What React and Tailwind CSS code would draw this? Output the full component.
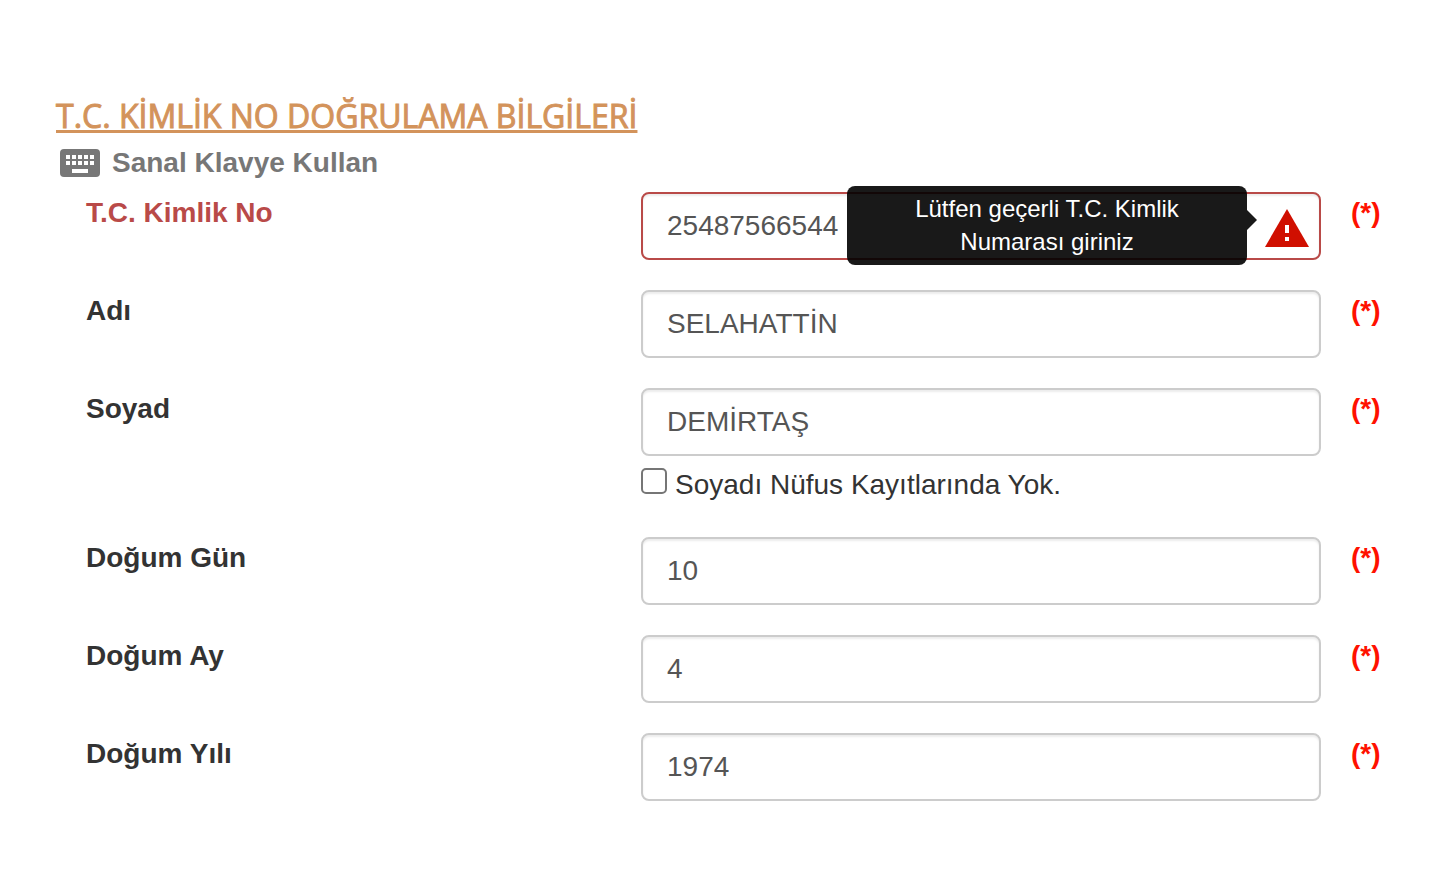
const fields = [
  { id: 'tckn',   label: 'T.C. Kimlik No', value: '25487566544', error: 'Lütfen geçerli T.C. Kimlik Numarası giriniz' },
  { id: 'adi',    label: 'Adı',            value: 'SELAHATTİN' },
  { id: 'soyad',  label: 'Soyad',          value: 'DEMİRTAŞ', checkbox: 'Soyadı Nüfus Kayıtlarında Yok.' },
  { id: 'gun',    label: 'Doğum Gün',      value: '10' },
  { id: 'ay',     label: 'Doğum Ay',       value: '4' },
  { id: 'yil',    label: 'Doğum Yılı',     value: '1974' },
]

function KeyboardIcon() {
  return (
    <svg width="40" height="28" viewBox="0 0 40 28" aria-hidden="true" className="shrink-0">
      <rect width="40" height="28" rx="4" fill="#777" />
      <g fill="#fff">
        {[6, 12].map(y => [6, 12, 18, 24, 30].map(x => (
          <rect key={`${x}-${y}`} x={x} y={y} width="4" height="4" />
        )))}
        <rect x="12" y="20" width="16" height="4" />
      </g>
    </svg>
  )
}

function WarningIcon() {
  return (
    <svg width="44" height="38" viewBox="0 0 44 38" aria-hidden="true">
      <path d="M22 0 44 38H0Z" fill="#d00f00" />
      <path d="M20 16h4v8h-4zM20 28h4v4h-4z" fill="#fff" />
    </svg>
  )
}

function ErrorHint({ text }) {
  return (
    <>
      <div role="tooltip"
        className="absolute -top-[6px] right-[74px] w-[400px] rounded-lg bg-black/90 px-4 pt-[6px] pb-[7px]
                   text-center text-2xl leading-[33px] text-white">
        <span className="block px-10">{text}</span>
        <span className="absolute left-full top-6 border-y-10 border-l-10 border-y-transparent border-l-black/90" />
      </div>
      <span className="absolute right-3 top-[17px]"><WarningIcon /></span>
    </>
  )
}

function Field({ id, label, value, error, checkbox }) {
  return (
    <div className="flex">
      <label htmlFor={id}
        className={`w-5/12 shrink-0 pl-[30px] font-bold ${error ? 'text-[#b94a48]' : 'text-[#333]'}`}>
        {label}
      </label>
      <div className="flex-1 min-w-0 px-[30px]">
        <div className="relative">
          <input id={id} type="text" defaultValue={value}
            className={`block w-full h-[68px] rounded-lg border-2 bg-white px-6 text-[#555] outline-none
                        shadow-[inset_0_2px_2px_rgba(0,0,0,0.075)]
                        ${error ? 'border-[#b94a48]' : 'border-[#ccc]'}`} />
          {error && <ErrorHint text={error} />}
        </div>
        {checkbox && (
          <label className="mt-2 mb-px flex items-start gap-2 text-[#333]">
            <input type="checkbox"
              className="mt-1 size-[26px] shrink-0 appearance-none rounded-[5px] border-2 border-[#767676] bg-white" />
            {checkbox}
          </label>
        )}
      </div>
      <span className="w-[37px] shrink-0 font-bold text-[#f10]">(*)</span>
    </div>
  )
}

export default function App() {
  return (
    <main className="min-h-screen bg-white pt-[92px] pb-[72px] pl-14 pr-[42px]
                     font-['Liberation_Sans',Arial,sans-serif] text-[28px] leading-[42px]">
      <h1 className="font-['Open_Sans',sans-serif] text-[32px] leading-[48px] text-[#d3935b]
                     [-webkit-text-stroke:1px_#d3935b]
                     underline decoration-[3px] underline-offset-2 [text-decoration-skip-ink:none]">
        T.C. KİMLİK NO DOĞRULAMA BİLGİLERİ
      </h1>
      <button type="button" className="mt-[2px] flex items-center gap-3 pl-1 font-bold text-[#777]">
        <KeyboardIcon />
        Sanal Klavye Kullan
      </button>
      <form className="mt-2 flex flex-col gap-[30px]">
        {fields.map(f => <Field key={f.id} {...f} />)}
      </form>
    </main>
  )
}
